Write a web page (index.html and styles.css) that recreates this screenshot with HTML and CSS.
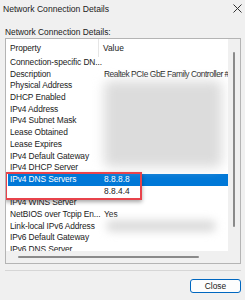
FILE: index.html
```html
<!DOCTYPE html>
<html lang="en">
<head>
    <meta charset="UTF-8">
    <title>Network Connection Details</title>
    <link rel="stylesheet" href="styles.css">
</head>
<body>
    <div class="dialog">
        <div class="titlebar">
            <span class="title">Network Connection Details</span>
            <svg class="close-x" width="9" height="9" viewBox="0 0 9 9">
                <path d="M0.5 0.5 L8.5 8.5 M8.5 0.5 L0.5 8.5" stroke="#333" stroke-width="1"/>
            </svg>
        </div>

        <div class="label">Network Connection Details:</div>

        <div class="listbox">
            <div class="list">
                <div class="row header">
                    <span class="cell prop">Property</span>
                    <span class="cell value">Value</span>
                </div>
                <div class="row"><span class="cell prop">Connection-specific DN...</span><span class="cell value"></span></div>
                <div class="row"><span class="cell prop">Description</span><span class="cell value desc">Realtek PCIe GbE Family Controller #2</span></div>
                <div class="row"><span class="cell prop">Physical Address</span><span class="cell value"></span></div>
                <div class="row"><span class="cell prop">DHCP Enabled</span><span class="cell value"></span></div>
                <div class="row"><span class="cell prop">IPv4 Address</span><span class="cell value"></span></div>
                <div class="row"><span class="cell prop">IPv4 Subnet Mask</span><span class="cell value"></span></div>
                <div class="row"><span class="cell prop">Lease Obtained</span><span class="cell value"></span></div>
                <div class="row"><span class="cell prop">Lease Expires</span><span class="cell value"></span></div>
                <div class="row"><span class="cell prop">IPv4 Default Gateway</span><span class="cell value"></span></div>
                <div class="row"><span class="cell prop">IPv4 DHCP Server</span><span class="cell value"></span></div>
                <div class="row selected"><span class="cell prop">IPv4 DNS Servers</span><span class="cell value">8.8.8.8</span></div>
                <div class="row"><span class="cell prop"></span><span class="cell value">8.8.4.4</span></div>
                <div class="row"><span class="cell prop">IPv4 WINS Server</span><span class="cell value"></span></div>
                <div class="row"><span class="cell prop">NetBIOS over Tcpip En...</span><span class="cell value">Yes</span></div>
                <div class="row"><span class="cell prop">Link-local IPv6 Address</span><span class="cell value"></span></div>
                <div class="row"><span class="cell prop">IPv6 Default Gateway</span><span class="cell value"></span></div>
                <div class="row"><span class="cell prop">IPv6 DNS Server</span><span class="cell value"></span></div>

                <!-- redacted values -->
                <div class="smudge smudge-top"></div>
                <div class="smudge smudge-bottom"></div>

                <!-- highlight marker -->
                <div class="marker"></div>
            </div>
            <div class="vscroll"><div class="vthumb"></div></div>
            <div class="hscroll"><div class="hthumb"></div></div>
            <div class="corner"></div>
        </div>

        <div class="separator"></div>

        <div class="buttons">
            <button class="btn">Close</button>
        </div>
    </div>
</body>
</html>
```

FILE: styles.css
```css
* {
    box-sizing: border-box;
    margin: 0;
    padding: 0;
}

body {
    background: #f0f0f0;
    font-family: 'Liberation Sans', Arial, sans-serif;
    font-size: 8.4px;
    color: #1a1a1a;
    width: 245px;
    height: 300px;
    overflow: hidden;
}

.dialog {
    display: flex;
    flex-direction: column;
    height: 300px;
}

.titlebar {
    display: flex;
    justify-content: space-between;
    align-items: center;
    height: 17px;
    padding: 0 3px 0 3px;
}

.title {
    font-size: 8.6px;
    color: #222;
}

.label {
    margin: 9px 0 0 5px;
    height: 12px;
    line-height: 12px;
}

.listbox {
    margin-left: 5px;
    width: 236px;
    height: 226px;
    border: 1px solid #b4b4b4;
    display: grid;
    grid-template-columns: 222px 12px;
    grid-template-rows: 212px 12px;
    background: #f0f0f0;
}

.list {
    position: relative;
    background: #fff;
    overflow: hidden;
}

.row {
    display: grid;
    grid-template-columns: 93px 1fr;
    height: 11.7px;
    line-height: 11.7px;
    margin-left: 2px;
    white-space: nowrap;
}

.row.header {
    height: 18px;
    line-height: 18px;
    margin-left: 0;
}

.header .prop {
    padding-left: 4px;
    border-right: 1px solid #e5e5e5;
}

.header .value {
    padding-left: 4px;
}

.prop {
    padding-left: 2px;
    letter-spacing: -0.1px;
}

.value {
    padding-left: 3px;
}

.desc {
    letter-spacing: -0.45px;
}

.row.selected {
    background: #0078d7;
    color: #fff;
}

.smudge {
    position: absolute;
    background: #dcdcdc;
    filter: blur(6px);
    border-radius: 6px;
}

.smudge-top {
    left: 98px;
    top: 42px;
    width: 118px;
    height: 86px;
}

.smudge-bottom {
    left: 100px;
    top: 181px;
    width: 110px;
    height: 12px;
    filter: blur(4px);
}

.marker {
    position: absolute;
    left: -1px;
    top: 133px;
    width: 137px;
    height: 28px;
    border: 2px solid #e8434b;
    box-shadow: 0 2px 4px rgba(0, 0, 0, 0.35);
}

.vscroll {
    position: relative;
}

.vthumb {
    position: absolute;
    left: 5px;
    top: 13px;
    width: 2px;
    height: 175px;
    background: #8a8a8a;
    border-radius: 1px;
}

.hscroll {
    position: relative;
}

.hthumb {
    position: absolute;
    left: 12px;
    top: 5px;
    width: 181px;
    height: 2px;
    background: #8a8a8a;
    border-radius: 1px;
}

.separator {
    margin: 6px 4px 0 5px;
    height: 1px;
    background: #d6d6d6;
}

.buttons {
    display: flex;
    justify-content: flex-end;
    padding: 8px 4px 0 0;
}

.btn {
    width: 51px;
    height: 14px;
    font-family: inherit;
    font-size: 8.4px;
    color: #1a1a1a;
    background: #fdfdfd;
    border: 1px solid #0067c0;
    border-radius: 3px;
}
```
